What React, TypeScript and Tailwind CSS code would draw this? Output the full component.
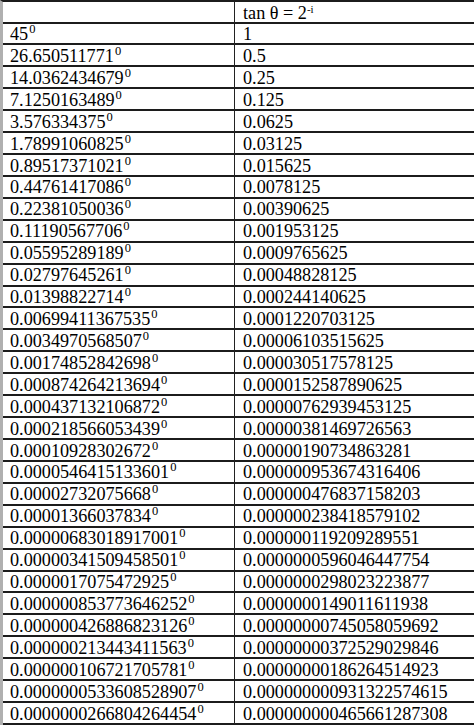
import React from 'react';

const rows: [string, string][] = [
  ['45', '1'],
  ['26.650511771', '0.5'],
  ['14.0362434679', '0.25'],
  ['7.1250163489', '0.125'],
  ['3.576334375', '0.0625'],
  ['1.78991060825', '0.03125'],
  ['0.89517371021', '0.015625'],
  ['0.44761417086', '0.0078125'],
  ['0.22381050036', '0.00390625'],
  ['0.11190567706', '0.001953125'],
  ['0.05595289189', '0.0009765625'],
  ['0.02797645261', '0.00048828125'],
  ['0.01398822714', '0.000244140625'],
  ['0.00699411367535', '0.0001220703125'],
  ['0.0034970568507', '0.00006103515625'],
  ['0.00174852842698', '0.000030517578125'],
  ['0.000874264213694', '0.0000152587890625'],
  ['0.000437132106872', '0.00000762939453125'],
  ['0.000218566053439', '0.00000381469726563'],
  ['0.00010928302672', '0.00000190734863281'],
  ['0.0000546415133601', '0.000000953674316406'],
  ['0.00002732075668', '0.000000476837158203'],
  ['0.00001366037834', '0.000000238418579102'],
  ['0.00000683018917001', '0.000000119209289551'],
  ['0.00000341509458501', '0.0000000596046447754'],
  ['0.0000017075472925', '0.0000000298023223877'],
  ['0.000000853773646252', '0.0000000149011611938'],
  ['0.000000426886823126', '0.00000000745058059692'],
  ['0.000000213443411563', '0.00000000372529029846'],
  ['0.000000106721705781', '0.00000000186264514923'],
  ['0.0000000533608528907', '0.000000000931322574615'],
  ['0.0000000266804264454', '0.000000000465661287308'],
];

const Deg = () => (
  <span className="inline-block align-top text-[12.5px] leading-none relative -top-[2px] ml-[1px]">0</span>
);

export default function App() {
  return (
    <div className="w-[474px] h-[725px] bg-white overflow-hidden text-black font-['Liberation_Serif',serif] text-[18.2px]">
      <div className="border-t-2 border-l-[3px] border-t-[#1c1c1c] border-l-[#b0b0b0] w-[520px]">
        <div className="grid grid-cols-[232px_1fr] h-[21.5px] border-b-2 border-[#1c1c1c]">
          <div className="border-r-[1.5px] border-[#222]" />
          <div className="pl-2 pt-[1.5px] leading-[19.5px]">
            tan θ = 2<span className="inline-block align-top text-[11px] leading-none relative top-[0px]">-i</span>
          </div>
        </div>
        {rows.map(([a, b], i) => (
          <div
            key={i}
            className="grid grid-cols-[232px_1fr] h-[21.93px] border-b-2 border-[#1c1c1c]"
          >
            <div className="border-r-[1.5px] border-[#222] pl-[7px] pt-[1.5px] leading-[19.5px] whitespace-nowrap">
              {a}
              <Deg />
            </div>
            <div className="pl-2 pt-[1.5px] leading-[19.5px] whitespace-nowrap">{b}</div>
          </div>
        ))}
      </div>
    </div>
  );
}
